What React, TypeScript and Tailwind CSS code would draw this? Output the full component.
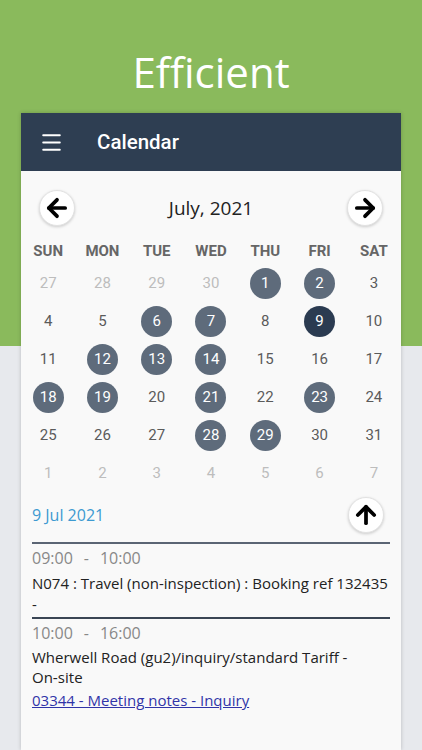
import { ArrowLeft, ArrowRight, ArrowUp, Menu } from 'lucide-react'

// calendar cells for July 2021, flagged by whether they belong to the month
const weeks: { day: number; muted?: boolean }[][] = [
  [{ day: 27, muted: true }, { day: 28, muted: true }, { day: 29, muted: true }, { day: 30, muted: true }, { day: 1 }, { day: 2 }, { day: 3 }],
  [{ day: 4 }, { day: 5 }, { day: 6 }, { day: 7 }, { day: 8 }, { day: 9 }, { day: 10 }],
  [{ day: 11 }, { day: 12 }, { day: 13 }, { day: 14 }, { day: 15 }, { day: 16 }, { day: 17 }],
  [{ day: 18 }, { day: 19 }, { day: 20 }, { day: 21 }, { day: 22 }, { day: 23 }, { day: 24 }],
  [{ day: 25 }, { day: 26 }, { day: 27 }, { day: 28 }, { day: 29 }, { day: 30 }, { day: 31 }],
  [{ day: 1, muted: true }, { day: 2, muted: true }, { day: 3, muted: true }, { day: 4, muted: true }, { day: 5, muted: true }, { day: 6, muted: true }, { day: 7, muted: true }],
]

const busyDays = [1, 2, 6, 7, 12, 13, 14, 18, 19, 21, 23, 28, 29]
const selectedDay = 9

const weekdays = ['SUN', 'MON', 'TUE', 'WED', 'THU', 'FRI', 'SAT']

function CircleButton({ children }: { children: React.ReactNode }) {
  return (
    <button
      type="button"
      className="flex h-[36px] w-[36px] items-center justify-center rounded-full border border-[#e2e2e2] bg-white shadow-[0_1px_3px_rgba(0,0,0,0.18)]"
    >
      {children}
    </button>
  )
}

function DayCell({ day, muted }: { day: number; muted?: boolean }) {
  let circle = ''
  let text = 'text-[#5b5b5b]'
  if (muted) {
    text = 'text-[#bdbdbd]'
  } else if (day === selectedDay) {
    circle = 'bg-[#2b3b51]'
    text = 'text-white'
  } else if (busyDays.includes(day)) {
    circle = 'bg-[#5e6b7b]'
    text = 'text-white'
  }

  return (
    <div className="flex h-[38px] items-center justify-center">
      <div className={`flex h-[31px] w-[31px] items-center justify-center rounded-full text-[15px] ${circle} ${text}`}>
        {day}
      </div>
    </div>
  )
}

function TimeRange({ from, to }: { from: string; to: string }) {
  return (
    <div className="flex text-[16px] leading-[24px] text-[#888]">
      <span>{from}</span>
      <span className="mx-[11px]">-</span>
      <span>{to}</span>
    </div>
  )
}

export default function App() {
  return (
    <div className="flex h-[750px] flex-col overflow-hidden bg-[linear-gradient(to_bottom,#8aba5c_346px,#e7e9ed_346px)] font-['Open_Sans',sans-serif]">
      {/* headline */}
      <div className="flex h-[113px] items-center justify-center pt-[30px]">
        <h1 className="text-[42px] leading-none text-white">Efficient</h1>
      </div>

      {/* phone card */}
      <div className="mx-[21px] flex flex-1 flex-col bg-[#f9f9f9] shadow-[0_0_4px_rgba(0,0,0,0.2)]">
        <div className="flex h-[58px] items-center bg-[#2e3e52] pl-[18px] font-['Roboto',sans-serif] text-white">
          <Menu className="h-[25px] w-[25px]" strokeWidth={1.8} />
          <span className="ml-[33px] text-[20.5px] font-medium">Calendar</span>
        </div>

        {/* month navigation */}
        <div className="mt-[19px] flex h-[36px] items-center justify-between px-[18px]">
          <CircleButton>
            <ArrowLeft className="h-[28px] w-[28px] text-black" strokeWidth={3.2} />
          </CircleButton>
          <span className="text-[19px] text-[#222]">July, 2021</span>
          <CircleButton>
            <ArrowRight className="h-[28px] w-[28px] text-black" strokeWidth={3.2} />
          </CircleButton>
        </div>

        {/* month grid */}
        <div className="font-['Roboto',sans-serif]">
          <div className="mt-[13px] grid h-[24px] grid-cols-7 items-center text-center text-[15px] font-bold text-[#666]">
            {weekdays.map((w) => (
              <span key={w}>{w}</span>
            ))}
          </div>
          <div className="mt-[1px]">
            {weeks.map((week, i) => (
              <div key={i} className="grid grid-cols-7">
                {week.map((cell, j) => (
                  <DayCell key={j} day={cell.day} muted={cell.muted} />
                ))}
              </div>
            ))}
          </div>
        </div>

        {/* selected day header */}
        <div className="mt-[5px] flex h-[36px] items-center justify-between pl-[11px] pr-[17px]">
          <span className="text-[16px] text-[#3d9ad1]">9 Jul 2021</span>
          <CircleButton>
            <ArrowUp className="h-[28px] w-[28px] text-black" strokeWidth={3.2} />
          </CircleButton>
        </div>

        {/* events */}
        <div className="mx-[11px] mt-[9px]">
          <div className="border-t-2 border-[#5b6574] pt-[2px]">
            <TimeRange from="09:00" to="10:00" />
            <div className="mt-[3px] text-[15px] leading-[21px] text-[#222]">
              N074 : Travel (non-inspection) : Booking ref 132435 -
            </div>
          </div>
          <div className="mt-[2px] border-t-2 border-[#3a4554] pt-[2px]">
            <TimeRange from="10:00" to="16:00" />
            <div className="mt-[2px] text-[15px] leading-[20px] text-[#222]">
              Wherwell Road (gu2)/inquiry/standard Tariff - On‑site
            </div>
            <a href="#" className="mt-[3px] block text-[15px] leading-[20px] text-[#3034a8] underline">
              03344 - Meeting notes - Inquiry
            </a>
          </div>
        </div>
      </div>
    </div>
  )
}
